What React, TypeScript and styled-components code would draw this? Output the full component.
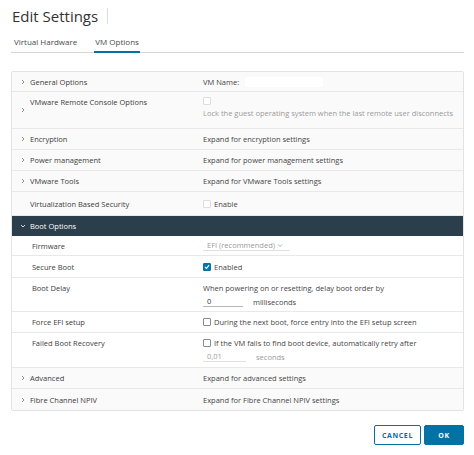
import React from "react";
import styled, { createGlobalStyle } from "styled-components";

const GlobalStyle = createGlobalStyle`
  html, body {
    margin: 0;
    padding: 0;
    background: #ffffff;
  }
  body {
    font-family: "Open Sans", "Liberation Sans", sans-serif;
    color: #313131;
  }
`;

const Dialog = styled.div`
  width: 474px;
  height: 455px;
  padding: 0 10px 0 11px;
  box-sizing: border-box;
  display: flex;
  flex-direction: column;
`;

const TitleBar = styled.div`
  display: flex;
  align-items: center;
  height: 32px;
  gap: 9px;
`;

const Title = styled.h1`
  margin: 0 0 0 1px;
  font-size: 15px;
  font-weight: 400;
  color: #333;
`;

const Divider = styled.span`
  width: 1px;
  height: 16px;
  background: #dcdcdc;
`;

const Tabs = styled.div`
  display: flex;
  gap: 16px;
  height: 19px;
  margin-top: 1px;
  padding-left: 2px;
  border-bottom: 1px solid #d7d7d7;
`;

const Tab = styled.div<{ $active?: boolean }>`
  font-size: 8px;
  line-height: 18px;
  color: #4a4a4a;
  padding: 0 1px;
  border-bottom: 2px solid ${(p) => (p.$active ? "#0072a3" : "transparent")};
  margin-bottom: -1px;
`;

const Panel = styled.div`
  margin-top: 18px;
  border: 1px solid #e3e3e3;
  border-radius: 2px;
  background: #fafafa;
`;

const Row = styled.div<{ $h: number; $sub?: boolean }>`
  display: grid;
  grid-template-columns: 191px 1fr;
  min-height: ${(p) => p.$h}px;
  box-sizing: border-box;
  border-bottom: 1px solid #e8e8e8;
  background: ${(p) => (p.$sub ? "#ffffff" : "#fafafa")};
  font-size: 7.5px;
  &:last-child {
    border-bottom: none;
  }
`;

const Label = styled.div<{ $top?: boolean; $indent?: number }>`
  display: flex;
  align-items: ${(p) => (p.$top ? "flex-start" : "center")};
  padding-left: ${(p) => p.$indent ?? 8}px;
  padding-top: ${(p) => (p.$top ? 5 : 0)}px;
  gap: 4px;
  color: #3d3d3d;
  font-weight: 500;
  position: relative;
`;

const Value = styled.div<{ $top?: boolean }>`
  display: flex;
  flex-direction: column;
  justify-content: ${(p) => (p.$top ? "flex-start" : "center")};
  padding-top: ${(p) => (p.$top ? 5 : 0)}px;
  color: #454545;
  gap: 3px;
`;

const Line = styled.div`
  display: flex;
  align-items: center;
  gap: 2px;
  white-space: nowrap;
`;

const Muted = styled.span`
  color: #9a9a9a;
`;

const Chevron: React.FC<{ open?: boolean; color?: string }> = ({ open, color = "#777" }) => (
  <svg width="6" height="6" viewBox="0 0 6 6" style={{ flex: "none" }}>
    <path
      d={open ? "M1 2 L3 4 L5 2" : "M2 1 L4 3 L2 5"}
      fill="none"
      stroke={color}
      strokeWidth="0.8"
    />
  </svg>
);

const ChevronSlot = styled.span<{ $abs?: boolean }>`
  display: inline-flex;
  width: 6px;
  ${(p) => (p.$abs ? "position: absolute; left: 8px; top: 15px;" : "")}
`;

const Box = styled.span<{ $checked?: boolean; $disabled?: boolean }>`
  width: 8px;
  height: 8px;
  box-sizing: border-box;
  border-radius: 1px;
  border: 1px solid ${(p) => (p.$checked ? "#0072a3" : p.$disabled ? "#dedede" : "#8a8a8a")};
  background: ${(p) => (p.$checked ? "#0079b8" : "#fff")};
  display: inline-flex;
  align-items: center;
  justify-content: center;
  margin-right: 1px;
`;

const Check = () => (
  <svg width="6" height="6" viewBox="0 0 6 6">
    <path d="M1 3 L2.5 4.5 L5 1.2" fill="none" stroke="#fff" strokeWidth="1.1" />
  </svg>
);

const Field = styled.span<{ $w: number; $muted?: boolean }>`
  display: inline-flex;
  align-items: center;
  width: ${(p) => p.$w}px;
  height: 11px;
  padding-left: 4px;
  box-sizing: border-box;
  border-bottom: 1px solid ${(p) => (p.$muted ? "#e0e0e0" : "#b5b5b5")};
  color: ${(p) => (p.$muted ? "#9a9a9a" : "#333")};
  margin-right: 8px;
`;

const NameField = styled.span`
  display: inline-block;
  width: 78px;
  height: 10px;
  background: #fff;
  margin-left: 4px;
`;

const Header = styled.div`
  display: flex;
  align-items: center;
  gap: 4px;
  height: 20px;
  padding-left: 8px;
  background: #2b3e4c;
  color: #fff;
  font-weight: 500;
  font-size: 7.5px;
`;

const Footer = styled.div`
  display: flex;
  justify-content: flex-end;
  gap: 3px;
  margin-top: 14px;
`;

const Button = styled.button<{ $primary?: boolean }>`
  height: 20px;
  min-width: ${(p) => (p.$primary ? 40 : 47)}px;
  border-radius: 2px;
  border: 1px solid #0072a3;
  background: ${(p) => (p.$primary ? "#0072a3" : "#fff")};
  color: ${(p) => (p.$primary ? "#fff" : "#0072a3")};
  font-family: "Open Sans", "Liberation Sans", sans-serif;
  font-size: 7px;
  font-weight: 700;
  letter-spacing: 0.6px;
  padding: 0 6px;
`;

type Simple = { label: string; value: React.ReactNode; chevron?: boolean };

const topRows: Simple[] = [
  { label: "Encryption", value: "Expand for encryption settings", chevron: true },
  { label: "Power management", value: "Expand for power management settings", chevron: true },
  { label: "VMware Tools", value: "Expand for VMware Tools settings", chevron: true },
];

const SimpleRow: React.FC<Simple & { h?: number }> = ({ label, value, chevron, h = 21 }) => (
  <Row $h={h}>
    <Label>
      <ChevronSlot>{chevron && <Chevron />}</ChevronSlot>
      {label}
    </Label>
    <Value>{value}</Value>
  </Row>
);

const App: React.FC = () => {
  return (
    <>
      <GlobalStyle />
      <Dialog>
        <TitleBar>
          <Title>Edit Settings</Title>
          <Divider />
        </TitleBar>
        <Tabs>
          <Tab>Virtual Hardware</Tab>
          <Tab $active>VM Options</Tab>
        </Tabs>

        <Panel>
          <Row $h={20}>
            <Label>
              <ChevronSlot>
                <Chevron />
              </ChevronSlot>
              General Options
            </Label>
            <Value>
              <Line>
                VM Name:
                <NameField />
              </Line>
            </Value>
          </Row>
          <Row $h={37}>
            <Label $top $indent={18}>
              <ChevronSlot $abs>
                <Chevron />
              </ChevronSlot>
              VMware Remote Console Options
            </Label>
            <Value $top>
              <Line>
                <Box $disabled />
              </Line>
              <Line>
                <Muted>Lock the guest operating system when the last remote user disconnects</Muted>
              </Line>
            </Value>
          </Row>
          {topRows.map((r) => (
            <SimpleRow key={r.label} {...r} />
          ))}
          <Row $h={24}>
            <Label $indent={18}>Virtualization Based Security</Label>
            <Value>
              <Line>
                <Box $disabled />
                Enable
              </Line>
            </Value>
          </Row>

          <Header>
            <Chevron open color="#fff" />
            Boot Options
          </Header>

          <Row $h={20} $sub>
            <Label $indent={20}>Firmware</Label>
            <Value>
              <Line>
                <Field $w={87} $muted>
                  EFI (recommended)&nbsp;
                  <svg width="6" height="5" viewBox="0 0 6 5">
                    <path d="M1 1.5 L3 3.5 L5 1.5" fill="none" stroke="#8aa" strokeWidth="0.9" />
                  </svg>
                </Field>
              </Line>
            </Value>
          </Row>
          <Row $h={22} $sub>
            <Label $indent={20}>Secure Boot</Label>
            <Value>
              <Line>
                <Box $checked>
                  <Check />
                </Box>
                Enabled
              </Line>
            </Value>
          </Row>
          <Row $h={34} $sub>
            <Label $top $indent={20}>
              Boot Delay
            </Label>
            <Value $top>
              <Line>When powering on or resetting, delay boot order by</Line>
              <Line>
                <Field $w={40}>0</Field>
                milliseconds
              </Line>
            </Value>
          </Row>
          <Row $h={21} $sub>
            <Label $indent={20}>Force EFI setup</Label>
            <Value>
              <Line>
                <Box />
                During the next boot, force entry into the EFI setup screen
              </Line>
            </Value>
          </Row>
          <Row $h={35} $sub>
            <Label $top $indent={20}>
              Failed Boot Recovery
            </Label>
            <Value $top>
              <Line>
                <Box />
                If the VM fails to find boot device, automatically retry after
              </Line>
              <Line>
                <Field $w={43} $muted>
                  0,01
                </Field>
                <Muted>seconds</Muted>
              </Line>
            </Value>
          </Row>
          <SimpleRow label="Advanced" value="Expand for advanced settings" chevron />
          <SimpleRow label="Fibre Channel NPIV" value="Expand for Fibre Channel NPIV settings" chevron />
        </Panel>

        <Footer>
          <Button>CANCEL</Button>
          <Button $primary>OK</Button>
        </Footer>
      </Dialog>
    </>
  );
};

export default App;
